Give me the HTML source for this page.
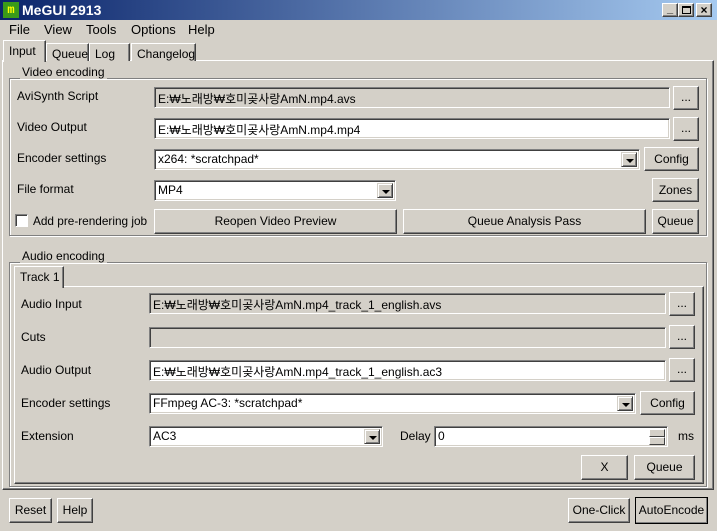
<!DOCTYPE html>
<html><head><meta charset="utf-8"><style>
*{box-sizing:border-box;margin:0;padding:0}
body{width:717px;height:531px;background:#d4d0c8;font:12px "Liberation Sans","Noto Sans CJK KR",sans-serif;color:#000;position:relative;overflow:hidden}
.a{position:absolute}
.sunk{position:absolute;background:#fff;border:1px solid;border-color:#808080 #fff #fff #808080;box-shadow:inset 1px 1px #404040,inset -1px -1px #d4d0c8;padding:2px 0 0 3px;white-space:nowrap;overflow:hidden;font-size:12px}
.ro{background:#d4d0c8}
.btn{position:absolute;background:#d4d0c8;border:1px solid;border-color:#fff #404040 #404040 #fff;box-shadow:inset -1px -1px #808080;text-align:center;font-size:12px}
.grp{position:absolute;border:1px solid #808080;box-shadow:inset 1px 1px #fff,1px 1px #fff}
.gl{position:absolute;background:#d4d0c8;padding:0 2px;font-size:12px}
.dd{position:absolute;right:2px;top:2px;bottom:2px;width:16px;background:#d4d0c8;border:1px solid;border-color:#d4d0c8 #404040 #404040 #d4d0c8;box-shadow:inset 1px 1px #fff,inset -1px -1px #808080}
.dd:after{content:"";position:absolute;left:4px;top:6px;border-left:4px solid transparent;border-right:4px solid transparent;border-top:4px solid #000}
.tab{position:absolute;border:1px solid;border-color:#fff #404040 transparent #fff;border-bottom:none;box-shadow:inset -1px 0 #808080;padding:3px 0 0 5px;background:#d4d0c8}
</style></head><body>
<div class="a" style="left:0;top:0;width:717px;height:20px;background:linear-gradient(90deg,#0a246a,#a6caf0)"></div>
<div class="a" style="left:3px;top:2px;width:16px;height:16px;background:#3a9a1a;color:#ff0;font:bold 12px 'Liberation Mono';text-align:center;line-height:16px">m</div>
<div class="a" style="left:22px;top:2px;color:#fff;font-weight:bold;font-size:14px">MeGUI 2913</div>
<div class="btn" style="left:662px;top:3px;width:16px;height:14px;font-weight:bold;line-height:10px;font-size:11px">_</div>
<div class="btn" style="left:678px;top:3px;width:16px;height:14px"><div class="a" style="left:3px;top:2px;width:9px;height:8px;border:1px solid #000;border-top-width:2px"></div></div>
<div class="btn" style="left:696px;top:3px;width:16px;height:14px;font-weight:bold;line-height:12px">×</div>
<div class="a" style="top:22px;left:9px;font-size:13px">File</div>
<div class="a" style="top:22px;left:44px;font-size:13px">View</div>
<div class="a" style="top:22px;left:86px;font-size:13px">Tools</div>
<div class="a" style="top:22px;left:131px;font-size:13px">Options</div>
<div class="a" style="top:22px;left:188px;font-size:13px">Help</div>
<div class="a" style="left:2px;top:60px;width:712px;height:430px;border:1px solid;border-color:#fff #404040 #404040 #fff;box-shadow:inset -1px -1px #808080"></div>
<div class="tab" style="left:46px;top:43px;width:43px;height:18px">Queue</div>
<div class="tab" style="left:89px;top:43px;width:41px;height:18px">Log</div>
<div class="tab" style="left:131px;top:43px;width:65px;height:18px">Changelog</div>
<div class="tab" style="left:3px;top:40px;width:43px;height:22px;padding-top:3px">Input</div>
<div class="grp" style="left:9px;top:78px;width:698px;height:158px"></div>
<div class="gl" style="left:20px;top:65px">Video encoding</div>
<div class="a" style="left:17px;top:89px">AviSynth Script</div>
<div class="sunk ro" style="left:154px;top:87px;width:516px;height:21px">E:₩노래방₩호미곶사랑AmN.mp4.avs</div>
<div class="btn" style="left:673px;top:86px;width:26px;height:24px;line-height:20px">...</div>
<div class="a" style="left:17px;top:120px">Video Output</div>
<div class="sunk" style="left:154px;top:118px;width:516px;height:21px">E:₩노래방₩호미곶사랑AmN.mp4.mp4</div>
<div class="btn" style="left:673px;top:117px;width:26px;height:24px;line-height:20px">...</div>
<div class="a" style="left:17px;top:151px">Encoder settings</div>
<div class="sunk" style="left:154px;top:149px;width:486px;height:21px">x264: *scratchpad*<div class="dd"></div></div>
<div class="btn" style="left:644px;top:147px;width:55px;height:24px;line-height:22px">Config</div>
<div class="a" style="left:17px;top:182px">File format</div>
<div class="sunk" style="left:154px;top:180px;width:242px;height:21px">MP4<div class="dd"></div></div>
<div class="btn" style="left:652px;top:178px;width:47px;height:24px;line-height:22px">Zones</div>
<div class="a" style="left:15px;top:214px;width:13px;height:13px;background:#fff;border:1px solid;border-color:#808080 #fff #fff #808080;box-shadow:inset 1px 1px #404040"></div>
<div class="a" style="left:33px;top:214px;font-size:11.8px">Add pre-rendering job</div>
<div class="btn" style="left:154px;top:209px;width:243px;height:25px;line-height:23px">Reopen Video Preview</div>
<div class="btn" style="left:403px;top:209px;width:243px;height:25px;line-height:23px">Queue Analysis Pass</div>
<div class="btn" style="left:652px;top:209px;width:47px;height:25px;line-height:23px">Queue</div>
<div class="grp" style="left:9px;top:262px;width:698px;height:225px"></div>
<div class="gl" style="left:20px;top:249px">Audio encoding</div>
<div class="a" style="left:14px;top:286px;width:690px;height:198px;border:1px solid;border-color:#fff #404040 #404040 #fff;box-shadow:inset -1px -1px #808080"></div>
<div class="tab" style="left:14px;top:266px;width:50px;height:22px;padding-top:3px">Track 1</div>
<div class="a" style="left:21px;top:297px">Audio Input</div>
<div class="sunk ro" style="left:149px;top:293px;width:517px;height:21px">E:₩노래방₩호미곶사랑AmN.mp4_track_1_english.avs</div>
<div class="btn" style="left:669px;top:292px;width:26px;height:24px;line-height:20px">...</div>
<div class="a" style="left:21px;top:330px">Cuts</div>
<div class="sunk ro" style="left:149px;top:327px;width:517px;height:21px"></div>
<div class="btn" style="left:669px;top:325px;width:26px;height:24px;line-height:20px">...</div>
<div class="a" style="left:21px;top:363px">Audio Output</div>
<div class="sunk" style="left:149px;top:360px;width:517px;height:21px">E:₩노래방₩호미곶사랑AmN.mp4_track_1_english.ac3</div>
<div class="btn" style="left:669px;top:358px;width:26px;height:24px;line-height:20px">...</div>
<div class="a" style="left:21px;top:396px">Encoder settings</div>
<div class="sunk" style="left:149px;top:393px;width:487px;height:21px">FFmpeg AC-3: *scratchpad*<div class="dd"></div></div>
<div class="btn" style="left:640px;top:391px;width:55px;height:24px;line-height:22px">Config</div>
<div class="a" style="left:21px;top:429px">Extension</div>
<div class="sunk" style="left:149px;top:426px;width:234px;height:21px">AC3<div class="dd"></div></div>
<div class="a" style="left:400px;top:429px">Delay</div>
<div class="sunk" style="left:434px;top:426px;width:234px;height:21px">0
<div class="a" style="right:2px;top:2px;width:16px;height:8px;background:#d4d0c8;border:1px solid;border-color:#fff #404040 #404040 #fff"></div>
<div class="a" style="right:2px;top:10px;width:16px;height:8px;background:#d4d0c8;border:1px solid;border-color:#fff #404040 #404040 #fff"></div></div>
<div class="a" style="left:678px;top:429px">ms</div>
<div class="btn" style="left:581px;top:455px;width:47px;height:25px;line-height:23px">X</div>
<div class="btn" style="left:634px;top:455px;width:61px;height:25px;line-height:23px">Queue</div>
<div class="btn" style="left:9px;top:498px;width:43px;height:25px;line-height:23px">Reset</div>
<div class="btn" style="left:57px;top:498px;width:36px;height:25px;line-height:23px">Help</div>
<div class="btn" style="left:568px;top:498px;width:62px;height:25px;line-height:23px">One-Click</div>
<div class="btn" style="left:635px;top:497px;width:73px;height:27px;line-height:25px;outline:1px solid #000;outline-offset:-1px">AutoEncode</div>
</body></html>
